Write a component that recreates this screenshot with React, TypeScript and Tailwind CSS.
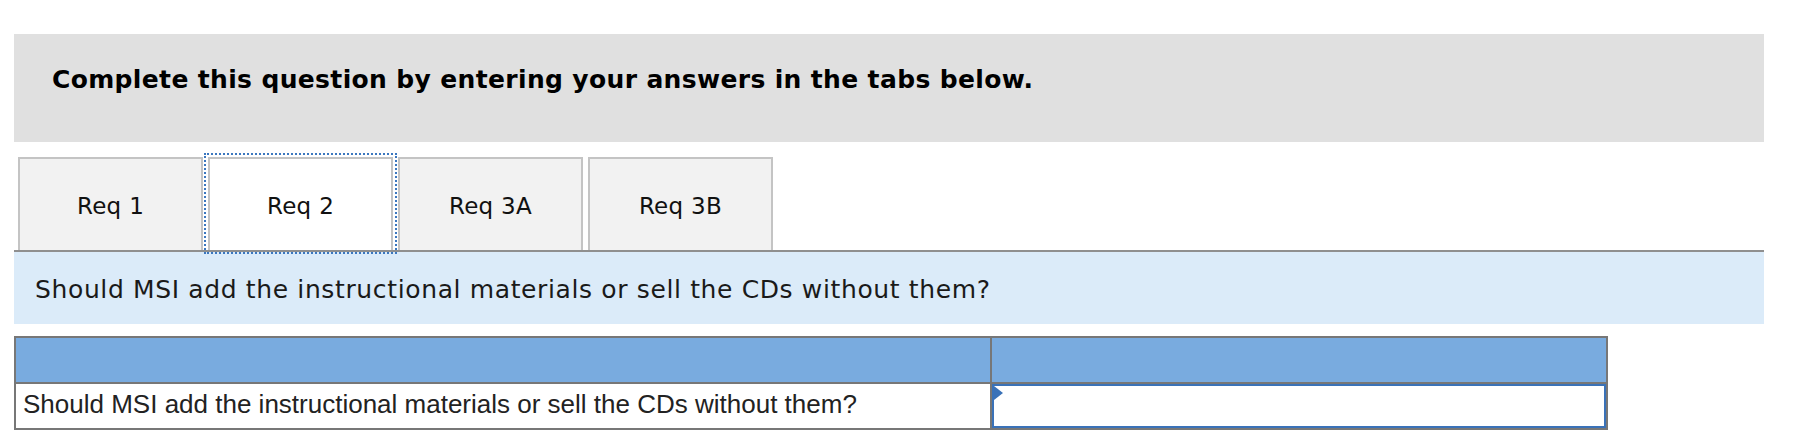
import React from "react";

const tabs = ["Req 1", "Req 2", "Req 3A", "Req 3B"];

export default function App() {
  return (
    <div className="w-[1820px] h-[444px] bg-white pt-[34px] font-['DejaVu_Sans',sans-serif] overflow-hidden">
      <div className="ml-[14px] w-[1750px] h-[108px] bg-[#e0e0e0] pl-[38px] pt-[33px]">
        <div className="text-[25px] leading-[25px] font-bold tracking-[0.35px] text-black whitespace-nowrap">
          Complete this question by entering your answers in the tabs below.
        </div>
      </div>

      <div className="ml-[14px] w-[1750px] mt-[15px] border-b-2 border-[#8f8f8f]">
        <div className="flex gap-[5px] pl-[4px]">
          {tabs.map((t, i) => (
            <div
              key={t}
              className={
                i === 1
                  ? "w-[185px] h-[93px] flex items-center justify-center pt-[4px] border-2 border-b-0 border-[#c4c4c4] bg-white text-[23px] tracking-[0.3px] text-[#111] outline-2 outline-dotted outline-[#3b77bf] outline-offset-2"
                  : "w-[185px] h-[93px] flex items-center justify-center pt-[4px] border-2 border-b-0 border-[#c4c4c4] bg-[#f2f2f2] text-[23px] tracking-[0.3px] text-[#111]"
              }
            >
              {t}
            </div>
          ))}
        </div>
      </div>

      <div className="ml-[14px] w-[1750px] h-[72px] bg-[#dbebf9] pl-[21px] pt-[25px]">
        <div className="text-[25px] leading-[25px] tracking-[0.63px] text-[#1a1a1a] whitespace-nowrap">
          Should MSI add the instructional materials or sell the CDs without them?
        </div>
      </div>

      <div className="ml-[14px] mt-[12px] w-[1594px] border-2 border-[#777777] font-['Liberation_Sans',Arial,sans-serif]">
        <div className="flex h-[46px] border-b-2 border-[#777777] bg-[#79abdf]">
          <div className="w-[976px] border-r-2 border-[#777777]" />
          <div className="flex-1" />
        </div>
        <div className="flex h-[44px]">
          <div className="w-[976px] border-r-2 border-[#777777] flex items-center pl-[7px] pb-[4px] text-[26px] text-[#222] whitespace-nowrap">
            Should MSI add the instructional materials or sell the CDs without them?
          </div>
          <div className="flex-1 relative border-2 border-[#3a72b8] bg-white">
            <svg
              className="absolute left-0 top-0"
              width="10"
              height="16"
              viewBox="0 0 10 16"
            >
              <polygon points="0,0 9,7 0,14" fill="#3a72b8" />
            </svg>
          </div>
        </div>
      </div>
    </div>
  );
}
